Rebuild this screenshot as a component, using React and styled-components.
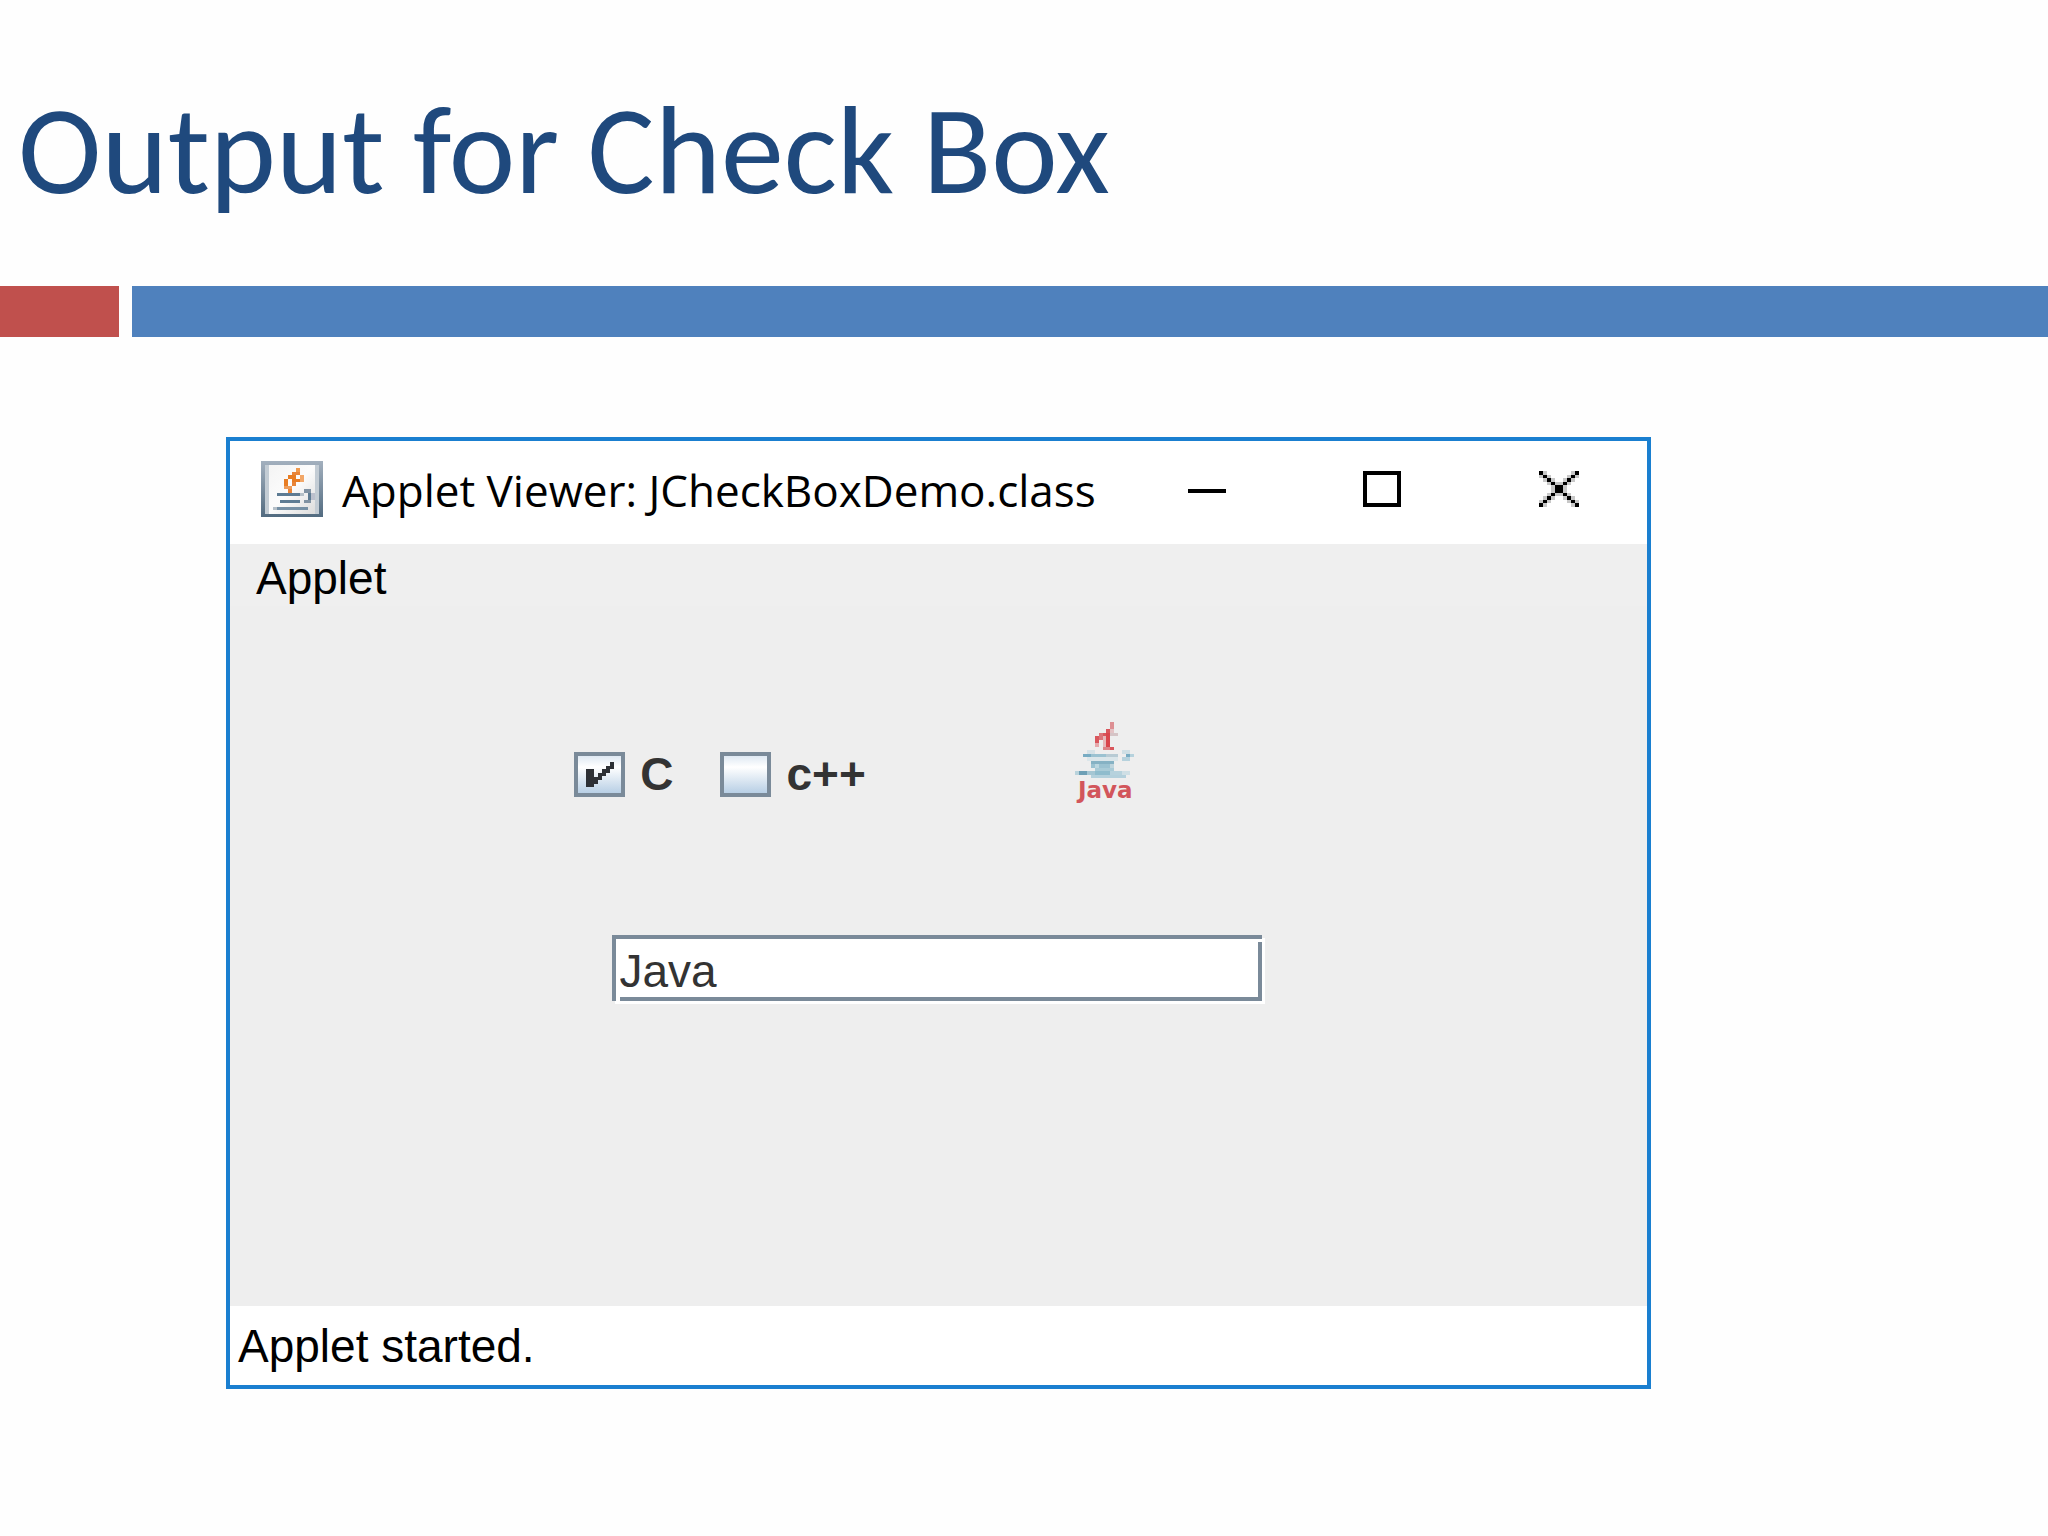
import { useState } from "react"
import styled, { createGlobalStyle } from "styled-components"

// pixel drawings: [x, y, width, height, color]
const appIconPixels = [
  [9, 2, 1, 1, "#f09a4e"],
  [8, 3, 2, 1, "#e8853a"],
  [7, 4, 2, 1, "#e87d24"],
  [10, 4, 1, 2, "#f2a768"],
  [6, 5, 1, 2, "#e87d24"],
  [8, 5, 2, 1, "#e87d24"],
  [6, 7, 2, 1, "#ee9d5c"],
  [8, 6, 1, 1, "#e8853a"],
  [7, 8, 1, 1, "#e8853a"],
  [4, 9, 6, 1, "#5d7b93"],
  [10, 9, 1, 1, "#b6c0c8"],
  [11, 8, 2, 1, "#8092a3"],
  [12, 9, 1, 2, "#5d7b93"],
  [13, 9, 1, 2, "#bcc0cd"],
  [11, 11, 2, 1, "#8092a3"],
  [5, 11, 5, 1, "#5d7b93"],
  [3, 13, 1, 1, "#b6c0c8"],
  [4, 13, 8, 1, "#7690a5"],
]

const javaPixels = [
  [7, 0, 1, 2, "#dd8f93"],
  [6, 2, 1, 1, "#d9565c"],
  [7, 2, 1, 1, "#e3c3c5"],
  [4, 3, 1, 1, "#dc7479"],
  [5, 3, 1, 1, "#d9565c"],
  [6, 3, 1, 3, "#d9464d"],
  [7, 3, 2, 1, "#d5c4c6"],
  [3, 4, 1, 2, "#d9565c"],
  [4, 4, 1, 1, "#dc7479"],
  [5, 4, 1, 1, "#e6b9bb"],
  [5, 5, 1, 2, "#e6b9bb"],
  [3, 6, 1, 1, "#e6a9ac"],
  [6, 6, 1, 1, "#d9464d"],
  [5, 7, 2, 1, "#dc8589"],
  [7, 7, 1, 1, "#d9565c"],
  [0, 9, 2, 1, "#78acc3"],
  [2, 9, 4, 1, "#9bc2d1"],
  [6, 9, 3, 1, "#b8cbd4"],
  [1, 8, 2, 1, "#d6e2e7"],
  [1, 10, 8, 1, "#dbe6ea"],
  [10, 8, 2, 1, "#cfdfe5"],
  [11, 9, 1, 1, "#78acc3"],
  [12, 9, 1, 1, "#b6d2dd"],
  [10, 10, 2, 1, "#b6d2dd"],
  [2, 11, 6, 1, "#86b2c4"],
  [2, 12, 1, 1, "#9bc2d1"],
  [3, 12, 1, 1, "#bcd7e0"],
  [4, 12, 3, 1, "#9bc2d1"],
  [7, 12, 1, 1, "#bfd5dd"],
  [3, 13, 5, 1, "#a9cbd7"],
  [-2, 14, 1, 1, "#b9d3dc"],
  [-1, 14, 2, 1, "#6d9fb5"],
  [1, 14, 2, 1, "#a5c6d3"],
  [3, 14, 4, 1, "#8fbccd"],
  [7, 14, 3, 1, "#b6d2dd"],
  [10, 14, 2, 1, "#cfdfe5"],
  [2, 15, 9, 1, "#b3d0dc"],
]

// the cross is two dotted diagonals on a 10x10 grid, with a light edge
const diagonal = [0, 1, 2, 3, 4, 5, 6, 7, 8, 9]
const closePixels = [
  ...diagonal.slice(0, 9).flatMap((i) => [
    [i + 1, i, 1, 1, "#c8c8c8"],
    [i, i + 1, 1, 1, "#c8c8c8"],
    [8 - i, i, 1, 1, "#c8c8c8"],
    [9 - i, i + 1, 1, 1, "#c8c8c8"],
  ]),
  ...diagonal.flatMap((i) => [
    [i, i, 1, 1, "#000"],
    [9 - i, i, 1, 1, "#000"],
  ]),
]

function Pixels({ data }) {
  return data.map(([x, y, w, h, fill], i) => (
    <rect key={i} x={x} y={y} width={w} height={h} fill={fill} />
  ))
}

function AppIcon() {
  return (
    <svg width="62" height="56" viewBox="0 0 16 16" preserveAspectRatio="none" shapeRendering="crispEdges" aria-hidden="true">
      <defs>
        <linearGradient id="frame" x1="0" y1="0" x2="0" y2="1">
          <stop offset="0" stopColor="#a3b0be" />
          <stop offset="1" stopColor="#526b80" />
        </linearGradient>
        <linearGradient id="face" x1="0" y1="0" x2="1" y2="1">
          <stop offset="0" stopColor="#f4f4f4" />
          <stop offset="0.5" stopColor="#fcfcfc" />
          <stop offset="1" stopColor="#dcdcdc" />
        </linearGradient>
      </defs>
      <rect width="16" height="16" fill="url(#frame)" />
      <rect x="1" y="1" width="14" height="14" fill="#c3ccd4" />
      <rect x="2" y="1" width="12" height="14" fill="url(#face)" />
      <Pixels data={appIconPixels} />
    </svg>
  )
}

function JavaLogo() {
  return (
    <svg width="64" height="90" viewBox="0 0 64 90" role="img" aria-label="Java">
      <g transform="translate(9 3) scale(3.9 3.5)" shapeRendering="crispEdges">
        <Pixels data={javaPixels} />
      </g>
      <JavaWord x="4" y="79">Java</JavaWord>
    </svg>
  )
}

function CheckOption({ label, checked, onChange }) {
  return (
    <Option>
      <CheckFrame>
        <CheckInput type="checkbox" checked={checked} onChange={onChange} />
        {checked && (
          <CheckMark viewBox="0 0 51 45" shapeRendering="crispEdges" aria-hidden="true">
            <path d="M12 17h8v8h4v-4h4v-4h4v-3h4v-4h4v7h-4v4h-4v3h-4v4h-4v4h-4v3h-8z" fill="#2d3035" />
          </CheckMark>
        )}
      </CheckFrame>
      {label}
    </Option>
  )
}

function App() {
  const [langs, setLangs] = useState({ C: true, "c++": false })
  const [text, setText] = useState("Java")

  const toggle = (name) => {
    setLangs({ ...langs, [name]: !langs[name] })
    setText(name)
  }

  return (
    <>
      <GlobalStyle />
      <Title>Output for Check Box</Title>
      <Stripe>
        <StripeRed />
        <StripeBlue />
      </Stripe>
      <Window>
        <TitleBar>
          <AppIcon />
          <WindowTitle>Applet Viewer: JCheckBoxDemo.class</WindowTitle>
          <WindowButton aria-label="Minimize">
            <svg width="40" height="36"><path d="M1 20h38" stroke="#000" strokeWidth="4" /></svg>
          </WindowButton>
          <WindowButton aria-label="Maximize">
            <svg width="40" height="36"><rect x="2" y="2" width="34" height="32" fill="none" stroke="#000" strokeWidth="4" /></svg>
          </WindowButton>
          <WindowButton aria-label="Close">
            <svg width="40" height="36" viewBox="0 0 10 10" preserveAspectRatio="none" shapeRendering="crispEdges">
              <Pixels data={closePixels} />
            </svg>
          </WindowButton>
        </TitleBar>
        <MenuBar>
          <MenuButton>Applet</MenuButton>
        </MenuBar>
        <Content>
          <Row>
            {Object.keys(langs).map((name) => (
              <CheckOption key={name} label={name} checked={langs[name]} onChange={() => toggle(name)} />
            ))}
            <LogoLabel>
              <JavaLogo />
            </LogoLabel>
          </Row>
          <TextField aria-label="Language" value={text} onChange={(e) => setText(e.target.value)} />
        </Content>
        <Status>Applet started.</Status>
      </Window>
    </>
  )
}

export default App

const GlobalStyle = createGlobalStyle`
* {
  box-sizing: border-box;
}
body {
  margin: 0;
  background: #fefefe;
  font-family: "Liberation Sans", Arial, sans-serif;
}
svg {
  display: block;
}
`

const Title = styled.h1`
margin: 0;
padding: 82px 18px 68px;
font-family: Carlito, Lato, sans-serif;
font-size: 126px;
line-height: 136px;
font-weight: 400;
color: #1f497d;
`

const Stripe = styled.div`
display: flex;
gap: 13px;
height: 51px;
`

const StripeRed = styled.div`
width: 119px;
background: #c0504d;
`

const StripeBlue = styled.div`
flex: 1;
background: #4f81bd;
`

const Window = styled.section`
margin: 100px 397px 100px 226px;
border: 4px solid #1a7fd0;
background: #fff;
`

const TitleBar = styled.header`
display: flex;
align-items: center;
height: 103px;
padding: 0 0 7px 31px;
`

const WindowTitle = styled.div`
flex: 1;
padding: 2px 0 0 19px;
font-family: "Open Sans", sans-serif;
font-size: 44px;
white-space: nowrap;
color: #000;
`

const WindowButton = styled.button`
display: flex;
align-items: center;
justify-content: center;
width: 176px;
height: 96px;
padding: 0;
border: none;
background: none;
`

const MenuBar = styled.nav`
display: flex;
height: 62px;
background: #efefef;
`

const MenuButton = styled.button`
padding: 6px 26px 0;
border: none;
background: none;
font-family: inherit;
font-size: 46px;
color: #000;
`

const Content = styled.main`
display: flex;
flex-direction: column;
align-items: center;
gap: 106px;
height: 700px;
padding: 113px 4px 0 0;
background: #eee;
`

const Row = styled.div`
display: flex;
align-items: center;
height: 110px;
`

const Option = styled.label`
display: flex;
align-items: center;
gap: 15px;
margin-right: 47px;
font-size: 46px;
font-weight: 700;
color: #333;
`

const CheckFrame = styled.span`
position: relative;
width: 51px;
height: 45px;
`

const CheckInput = styled.input`
appearance: none;
display: block;
width: 100%;
height: 100%;
margin: 0;
border: 4px solid #7a8a99;
background: linear-gradient(#dfe9f3, #fff 30%, #b8cfe5);
`

const CheckMark = styled.svg`
position: absolute;
inset: 0;
pointer-events: none;
`

const LogoLabel = styled.div`
display: flex;
justify-content: center;
align-self: flex-start;
width: 386px;
`

const JavaWord = styled.text`
font-family: "DejaVu Sans", sans-serif;
font-size: 23px;
font-weight: 700;
fill: #d2555b;
`

// the edge lines stop short at two corners, like Metal's flush border
const TextField = styled.input`
width: 650px;
height: 66px;
padding: 10px 8px 4px;
border: none;
border-radius: 0;
outline: none;
background:
  linear-gradient(#7a8a99, #7a8a99) 0 0 / 100% 4px no-repeat,
  linear-gradient(#7a8a99, #7a8a99) 0 0 / 4px 100% no-repeat,
  linear-gradient(#7a8a99, #7a8a99) 8px 100% / 100% 4px no-repeat,
  linear-gradient(#7a8a99, #7a8a99) 100% 7px / 4px 100% no-repeat,
  #fff;
box-shadow: 3px 3px 0 #fff;
font-family: inherit;
font-size: 46px;
color: #333;
`

const Status = styled.footer`
height: 79px;
padding-left: 8px;
font-size: 46px;
line-height: 80px;
color: #000;
`
